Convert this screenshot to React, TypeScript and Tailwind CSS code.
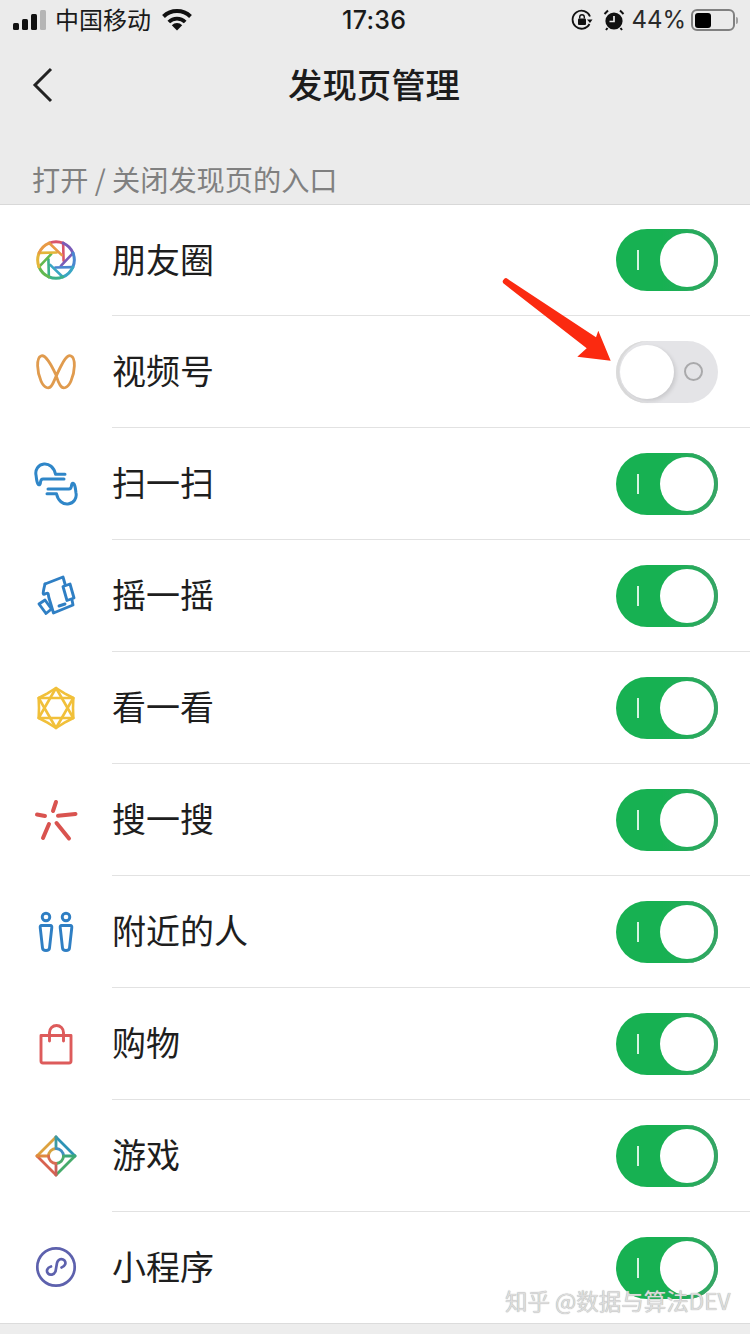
import React from "react";

const cjk = "font-['Noto_Sans_CJK_SC','Noto_Sans',sans-serif]";

function pt(r: number, deg: number, c = 22) {
  const a = ((deg - 90) * Math.PI) / 180;
  return [c + r * Math.cos(a), c + r * Math.sin(a)];
}

function Icon({ children }: { children: React.ReactNode }) {
  return (
    <svg viewBox="0 0 44 44" width={44} height={44} fill="none" strokeLinecap="round" strokeLinejoin="round">
      {children}
    </svg>
  );
}

function Moments() {
  const colors = ["#d9566b", "#7a5bb8", "#4a86d0", "#3aa6c4", "#3bb08a", "#62b84f", "#e3b63a", "#e89a45"];
  return (
    <Icon>
      {colors.map((c, i) => {
        const d = i * 45;
        const [x1, y1] = pt(18.3, d - 22);
        const [x2, y2] = pt(18.3, d + 23);
        const [ix, iy] = pt(7.6, d + 23 + 72);
        return (
          <g key={c} stroke={c} strokeWidth={3}>
            <path d={`M${x1} ${y1}A18.3 18.3 0 0 1 ${x2} ${y2}`} />
            <path d={`M${x2} ${y2}L${ix} ${iy}`} strokeWidth={2.6} />
          </g>
        );
      })}
    </Icon>
  );
}

function Channels() {
  return (
    <Icon>
      <g stroke="#e09b4e" strokeWidth={2.8}>
        <path d="M22 25C17 14 11 4 7 6C2 8 3 22 7 31C10 38 15 40 18 35C20 32 21 28 26 18C29 12 33 4 37 6C42 8 41 22 37 31C34 38 29 40 26 35C24 32 23 28 22 25Z" />
      </g>
    </Icon>
  );
}

function Scan() {
  const d =
    "M31 12.3H21.5C20 5 15 1.5 10 2C4 2.5 1 8 2 13C2.5 16 2.5 20 4 22C5.5 24 6.5 22 6.5 20C6.8 18 7.5 17 9 17H30";
  return (
    <Icon>
      <g stroke="#2f86c8" strokeWidth={3}>
        <path d={d} />
        <path d={d} transform="rotate(180 22 22)" />
      </g>
    </Icon>
  );
}

function Shake() {
  return (
    <Icon>
      <g stroke="#2f7fc4" strokeWidth={2.9}>
        <path d="M11 10L29 3L31 10" />
        <path d="M29 12.5L36 10L40 24L33 26.5Z" />
        <path d="M38 26L39 31L19.5 39L15 24C14 21 15 18 12 19.5C9 21 8 22 11 10" />
        <path d="M5 30L11 26L17.5 35L12 39.5Z" />
        <path d="M25 32L31 30" />
      </g>
    </Icon>
  );
}

function Look() {
  const star = Array.from({ length: 12 }, (_, i) => pt(i % 2 ? 17 : 20, i * 30).join(" ")).join("L");
  const t1 = [0, 120, 240].map((a) => pt(20, a).join(" ")).join("L");
  const t2 = [60, 180, 300].map((a) => pt(20, a).join(" ")).join("L");
  return (
    <Icon>
      <g stroke="#f1c03a" strokeWidth={2.6}>
        <path d={`M${star}Z`} />
        <path d={`M${t1}Z`} />
        <path d={`M${t2}Z`} />
      </g>
    </Icon>
  );
}

function Search() {
  return (
    <Icon>
      <g stroke="#d9534f" strokeWidth={4} strokeLinecap="round">
        <path d="M22 4L19 13" />
        <path d="M3 16.5L11 18" />
        <path d="M24 17.8L41.5 16" />
        <path d="M15 26L9 40" />
        <path d="M22.5 25L35 40.5" />
      </g>
    </Icon>
  );
}

function Nearby() {
  return (
    <Icon>
      <g stroke="#2f7fc4" strokeWidth={2.9}>
        <circle cx="12" cy="7" r="3.8" />
        <circle cx="32" cy="7" r="3.8" />
        <path d="M7.5 15.5H16.5Q18 15.5 17.8 17.5L15.5 38Q15.2 40.5 12 40.5Q8.8 40.5 8.5 38L6.2 17.5Q6 15.5 7.5 15.5Z" />
        <path d="M27.5 15.5H36.5Q38 15.5 37.8 17.5L35.5 38Q35.2 40.5 32 40.5Q28.8 40.5 28.5 38L26.2 17.5Q26 15.5 27.5 15.5Z" />
      </g>
    </Icon>
  );
}

function Shop() {
  return (
    <Icon>
      <g stroke="#dd5b5b" strokeWidth={2.9}>
        <path d="M7 13.5H37V39Q37 41 35 41H9Q7 41 7 39Z" />
        <path d="M15.5 19V10.5A7 7 0 0 1 29.5 10.5V19" />
      </g>
    </Icon>
  );
}

function Game() {
  return (
    <Icon>
      <g strokeWidth={2.8}>
        <path d="M3 22L22 3" stroke="#dda23f" />
        <path d="M22 3L41 22" stroke="#2d93b5" />
        <path d="M41 22L22 41" stroke="#46ab6b" />
        <path d="M22 41L3 22" stroke="#d8624f" />
        <path d="M22 3V14.5" stroke="#3f9aa0" />
        <path d="M41 22H29.5" stroke="#3aa878" />
        <path d="M22 41V29.5" stroke="#c9605a" />
        <path d="M3 22H14.5" stroke="#e08a3f" />
        <path d="M14.5 22A7.5 7.5 0 0 1 22 14.5" stroke="#d7a23f" />
        <path d="M22 14.5A7.5 7.5 0 0 1 29.5 22" stroke="#3f8fc0" />
        <path d="M29.5 22A7.5 7.5 0 0 1 22 29.5" stroke="#4bab6a" />
        <path d="M22 29.5A7.5 7.5 0 0 1 14.5 22" stroke="#d96b52" />
      </g>
    </Icon>
  );
}

function Mini() {
  return (
    <Icon>
      <g stroke="#5d61ad" strokeWidth={2.7}>
        <circle cx="22" cy="22" r="18.7" />
        <path d="M17 21.5C13 22.5 12 26 14 28.5C16 30.5 20 30 21.5 26.5L23 18C24 14 28 13 30.5 15.5C32.5 18 31 21.5 27.5 22.5" />
      </g>
    </Icon>
  );
}

const rows: { name: string; icon: React.ReactNode; on: boolean }[] = [
  { name: "朋友圈", icon: <Moments />, on: true },
  { name: "视频号", icon: <Channels />, on: false },
  { name: "扫一扫", icon: <Scan />, on: true },
  { name: "摇一摇", icon: <Shake />, on: true },
  { name: "看一看", icon: <Look />, on: true },
  { name: "搜一搜", icon: <Search />, on: true },
  { name: "附近的人", icon: <Nearby />, on: true },
  { name: "购物", icon: <Shop />, on: true },
  { name: "游戏", icon: <Game />, on: true },
  { name: "小程序", icon: <Mini />, on: true },
];

function Toggle({ on }: { on: boolean }) {
  if (on) {
    return (
      <div className="flex h-[62px] w-[102px] items-center justify-between rounded-full bg-[linear-gradient(90deg,#17b152_45%,#2fa862_100%)] pl-[21px] pr-[4px] shadow-[inset_-3px_0_0_#37a565]">
        <div className="h-[20px] w-[2px] bg-[#d8f3e2]" />
        <div className="h-[54px] w-[54px] rounded-full bg-white" />
      </div>
    );
  }
  return (
    <div className="flex h-[62px] w-[102px] items-center justify-between rounded-full bg-[#e4e4e7] pl-[4px] pr-[15px] shadow-[inset_3px_0_0_#dadada]">
      <div className="h-[54px] w-[54px] rounded-full bg-white shadow-[2px_2px_4px_rgba(0,0,0,0.12)]" />
      <div className="h-[19px] w-[19px] rounded-full border-2 border-[#a9a9ab]" />
    </div>
  );
}

function StatusBar() {
  return (
    <div className="flex h-[40px] items-center justify-between pl-[13px] pr-[12px] text-[#1a1a1a]">
      <div className="flex items-center">
        <svg width={34} height={22} viewBox="0 0 34 22">
          <rect x="0" y="14" width="6" height="7" rx="1.5" fill="#111" />
          <rect x="9" y="10" width="6" height="11" rx="1.5" fill="#111" />
          <rect x="18" y="5" width="6" height="16" rx="1.5" fill="#111" />
          <rect x="27" y="1" width="6" height="20" rx="1.5" fill="#b5b5b5" />
        </svg>
        <span className={`${cjk} ml-[8px] pb-[2px] text-[24px] leading-none`}>中国移动</span>
        <svg width={32} height={24} viewBox="0 0 32 24" className="ml-[10px]">
          <path d="M16 22.5L10.8 17.2A7.4 7.4 0 0 1 21.2 17.2Z" fill="#111" />
          <path d="M7.8 14A11.8 11.8 0 0 1 24.2 14" stroke="#111" strokeWidth="3.8" fill="none" />
          <path d="M2.5 8.5A19.5 19.5 0 0 1 29.5 8.5" stroke="#111" strokeWidth="4" fill="none" />
        </svg>
      </div>
      <span className="font-['Inter','Liberation_Sans',sans-serif] absolute left-[342px] text-[25px] font-medium leading-none tracking-[0.3px]">
        17:36
      </span>
      <div className="flex items-center">
        <svg width={22} height={22} viewBox="0 0 22 22">
          <path d="M18.5 15A9 9 0 1 1 19 7.5" stroke="#111" strokeWidth="1.8" fill="none" />
          <path d="M21.5 10.5H16L19 14Z" fill="#111" />
          <rect x="7" y="9.5" width="8" height="6.5" rx="1" fill="#111" />
          <path d="M8.7 9.5V8A2.3 2.3 0 0 1 13.3 8V9.5" stroke="#111" strokeWidth="1.4" fill="none" />
        </svg>
        <svg width={22} height={22} viewBox="0 0 22 22" className="ml-[10px]">
          <circle cx="11" cy="12" r="8.6" fill="#111" />
          <path d="M11 7V12.5H6.5" stroke="#eaeaea" strokeWidth="1.7" fill="none" />
          <path d="M1.5 5L5 1.5M20.5 5L17 1.5M4.5 19L3 21M17.5 19L19 21" stroke="#111" strokeWidth="2" />
        </svg>
        <span className="ml-[6px] font-['Inter','Liberation_Sans',sans-serif] text-[24px] leading-none text-[#2a2a2a]">44%</span>
        <div className="ml-[5px] flex h-[22px] w-[44px] items-center rounded-[6px] border-2 border-[#808080] p-[1.5px]">
          <div className="h-full w-[16px] rounded-[3px] bg-black" />
        </div>
        <div className="ml-[1px] h-[7px] w-[2px] rounded-r bg-[#a0a0a0]" />
      </div>
    </div>
  );
}

export default function App() {
  return (
    <div className={`${cjk} relative h-[1334px] w-[750px] overflow-hidden bg-white`}>
      <div className="h-[205px] border-b border-[#d8d8d8] bg-[#ebebeb]">
        <StatusBar />
        <div className="relative flex h-[90px] items-center justify-center pb-[4px] pr-[2px]">
          <svg width={24} height={36} viewBox="0 0 24 36" className="absolute left-[31px] top-[27px]" fill="none">
            <path d="M20 2L4 18L20 34" stroke="#222" strokeWidth="3" />
          </svg>
          <span className="text-[34.4px] font-medium leading-none text-[#1c1c1c]">发现页管理</span>
        </div>
        <div className="flex h-[74px] items-center pl-[32px] pt-[24px] text-[28.2px] leading-none text-[#808080]">
          打开 / 关闭发现页的入口
        </div>
      </div>

      <div>
        {rows.map((r, i) => (
          <div key={r.name} className={`flex items-center ${i === 0 || i === rows.length - 1 ? "h-[111px]" : "h-[112px]"}`}>
            <div className="flex h-full w-[112px] shrink-0 items-center pb-[1px] pl-[34px]">{r.icon}</div>
            <div
              className={`flex h-full flex-1 items-center justify-between pr-[32px] ${
                i < rows.length - 1 ? "border-b border-[#e2e2e2]" : ""
              }`}
            >
              <span className="pb-[3px] text-[34px] leading-none text-[#1e1e1e]">{r.name}</span>
              <Toggle on={r.on} />
            </div>
          </div>
        ))}
      </div>

      <div className="h-[11px] border-t border-[#dcdcdc] bg-[#ededed]" />

      <svg className="absolute left-[495px] top-[270px]" width={125} height={100} viewBox="0 0 125 100">
        <path d="M8.3 10Q10 7.5 11.7 8.3L101 67.3L103.3 60.7L115.7 90.7L82.3 86.7L91.7 78.3L8.3 13.3Q7 11.5 8.3 10Z" fill="#fb2a10" />
      </svg>

      <div className="absolute left-[505px] top-[1286px] text-[22.5px] leading-[28px] text-[#dcdcdc] [text-shadow:0_0_1px_#999]">
        知乎 @数据与算法DEV
      </div>
    </div>
  );
}
